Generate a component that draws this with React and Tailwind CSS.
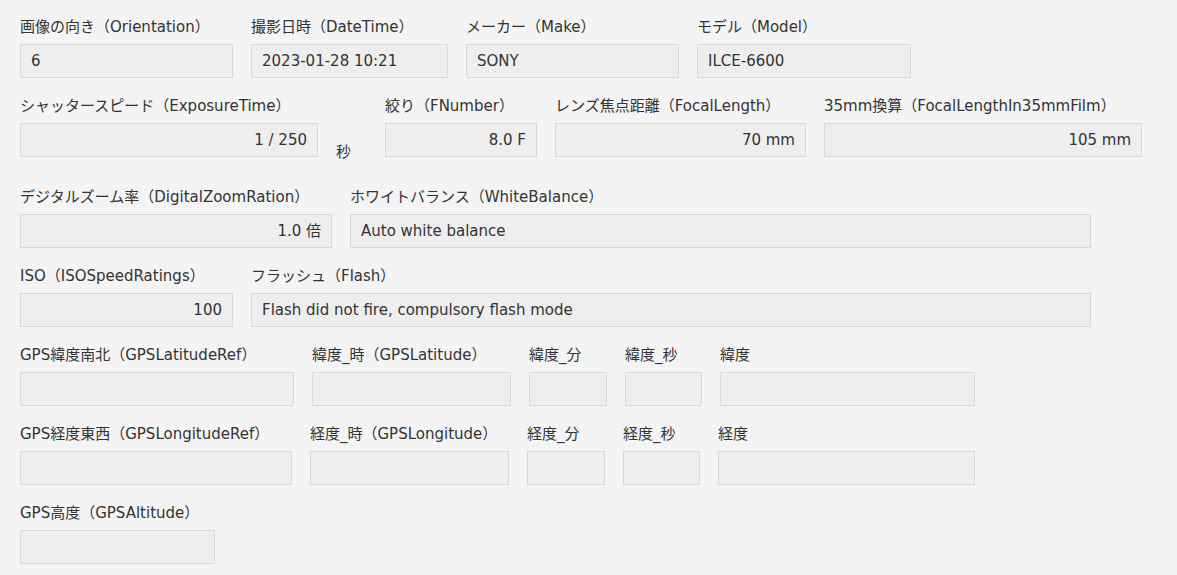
import React from 'react';

const rows = [
  [
    { label: '画像の向き（Orientation）', value: '6', w: 213 },
    { label: '撮影日時（DateTime）', value: '2023-01-28 10:21', w: 197 },
    { label: 'メーカー（Make）', value: 'SONY', w: 213 },
    { label: 'モデル（Model）', value: 'ILCE-6600', w: 214 },
  ],
  [
    { label: 'シャッタースピード（ExposureTime）', value: '1 / 250', w: 298, right: true, unit: '秒' },
    { label: '絞り（FNumber）', value: '8.0 F', w: 152, right: true },
    { label: 'レンズ焦点距離（FocalLength）', value: '70 mm', w: 251, right: true },
    { label: '35mm換算（FocalLengthIn35mmFilm）', value: '105 mm', w: 318, right: true },
  ],
  [
    { label: 'デジタルズーム率（DigitalZoomRation）', value: '1.0 倍', w: 312, right: true },
    { label: 'ホワイトバランス（WhiteBalance）', value: 'Auto white balance', w: 741 },
  ],
  [
    { label: 'ISO（ISOSpeedRatings）', value: '100', w: 213, right: true },
    { label: 'フラッシュ（Flash）', value: 'Flash did not fire, compulsory flash mode', w: 840 },
  ],
  [
    { label: 'GPS緯度南北（GPSLatitudeRef）', value: '', w: 274 },
    { label: '緯度_時（GPSLatitude）', value: '', w: 199 },
    { label: '緯度_分', value: '', w: 78 },
    { label: '緯度_秒', value: '', w: 77 },
    { label: '緯度', value: '', w: 255 },
  ],
  [
    { label: 'GPS経度東西（GPSLongitudeRef）', value: '', w: 272 },
    { label: '経度_時（GPSLongitude）', value: '', w: 199 },
    { label: '経度_分', value: '', w: 78 },
    { label: '経度_秒', value: '', w: 77 },
    { label: '経度', value: '', w: 257 },
  ],
  [{ label: 'GPS高度（GPSAltitude）', value: '', w: 195 }],
];

const Field = ({ f }) => (
  <>
    <div className="flex flex-col" style={{ width: f.w }}>
      <div className="text-[15px] leading-[22px] mb-[6px] whitespace-nowrap">{f.label}</div>
      <div
        className={
          'h-[34px] border border-[#d8d8d8] bg-[#eeeeee] px-[10px] flex items-center text-[15px] whitespace-nowrap ' +
          (f.right ? 'justify-end' : 'justify-start')
        }
      >
        {f.value}
      </div>
    </div>
    {f.unit && (
      <div className="w-[31px] mt-[46px] mb-[6px] text-[15px] leading-[22px]">{f.unit}</div>
    )}
  </>
);

const App = () => {
  return (
    <div
      className="min-h-screen bg-[#f4f4f4] text-[#333333] pl-[20px] pt-[16px]"
      style={{ fontFamily: '"DejaVu Sans", "Noto Sans CJK JP", sans-serif' }}
    >
      {rows.map((row, i) => (
        <div key={i} className="flex items-start gap-[18px] mb-[17px]">
          {row.map((f, j) => (
            <Field key={j} f={f} />
          ))}
        </div>
      ))}
    </div>
  );
};

export default App;
